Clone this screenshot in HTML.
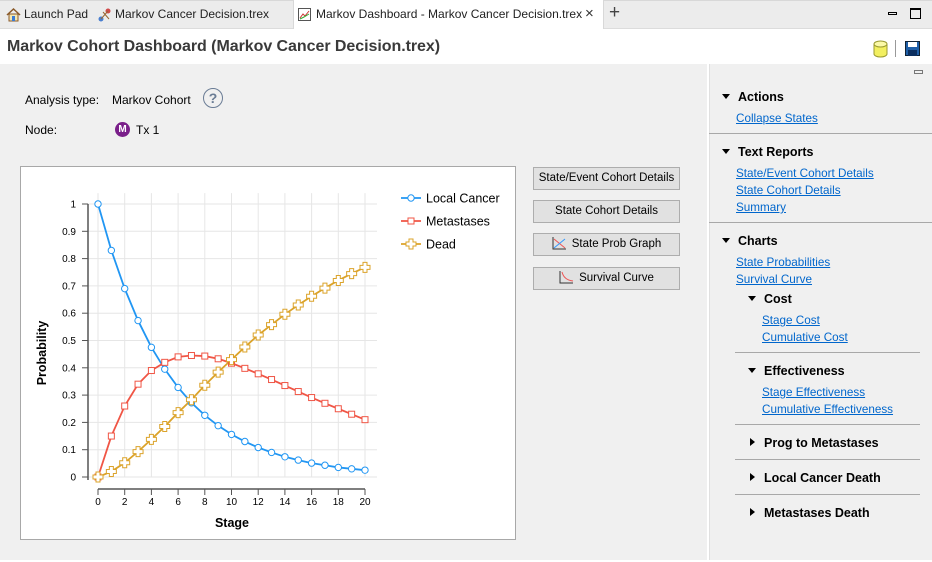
<!DOCTYPE html>
<html><head><meta charset="utf-8"><style>
*{margin:0;padding:0;box-sizing:border-box}
body{width:932px;height:562px;background:#f0f0f0;font-family:"Liberation Sans",sans-serif;font-size:12px;color:#000;position:relative;overflow:hidden}
.abs{position:absolute}
.tabbar{left:0;top:0;width:932px;height:29px;background:#ececec;border-top:1px solid #d8d8d8;border-bottom:1px solid #dcdcdc}
.tab{top:7px;font-size:12px;color:#222;white-space:nowrap}
.hdr{left:0;top:29px;width:932px;height:35px;background:#fff}
.btn{left:533px;width:147px;height:23px;background:#e1e1e1;border:1px solid #adadad;font-size:11.5px;text-align:center;line-height:21px;color:#000}
a{color:#0066cc;text-decoration:underline;font-size:11.7px;position:absolute;white-space:nowrap}
.sh{font-weight:bold;font-size:12.5px;position:absolute;white-space:nowrap}
.tri{display:inline-block;width:0;height:0;border-left:4px solid transparent;border-right:4px solid transparent;border-top:5px solid #000;margin-right:8px;vertical-align:2px}
.trr{display:inline-block;width:0;height:0;border-top:4px solid transparent;border-bottom:4px solid transparent;border-left:5px solid #000;margin-right:9px;margin-left:2px;vertical-align:1px}
.sep{height:1px;background:#a8a8a8;position:absolute}
</style></head><body>
<div class="abs tabbar"></div>
<div class="abs" style="left:293px;top:0;width:311px;height:29px;background:#fff;border-left:1px solid #d8d8d8;border-right:1px solid #d8d8d8"></div>
<svg class="abs" style="left:6px;top:7px" width="15" height="15"><path d="M1 8 L7.5 2 L14 8" fill="none" stroke="#8a5a2a" stroke-width="1.5"/><rect x="3" y="7" width="9" height="7" fill="#f4e6b0" stroke="#8a5a2a"/><rect x="6" y="9" width="3" height="5" fill="#3a7bd5"/></svg>
<div class="abs tab" style="left:24px">Launch Pad</div>
<svg class="abs" style="left:97px;top:7px" width="15" height="15"><circle cx="4" cy="12" r="2.5" fill="#4a7fd0"/><circle cx="11" cy="4" r="2.5" fill="#d04a4a"/><path d="M4 12 L11 4 M6 5 L12 12" stroke="#996633" fill="none"/></svg>
<div class="abs tab" style="left:115px">Markov Cancer Decision.trex</div>
<svg class="abs" style="left:298px;top:8px" width="13" height="13"><rect x=".5" y=".5" width="12" height="12" fill="#fff" stroke="#555"/><path d="M2 10 L5 6 L7 8 L11 3" stroke="#c33" fill="none"/><path d="M2 11 L6 9 L11 6" stroke="#3a3" fill="none"/></svg>
<div class="abs tab" style="left:316px">Markov Dashboard - Markov Cancer Decision.trex</div>
<div class="abs" style="left:585px;top:5px;font-size:15px;color:#333">×</div>
<div class="abs" style="left:609px;top:2px;font-size:19px;color:#444">+</div>
<div class="abs" style="left:888px;top:12px;width:9px;height:3px;border:1px solid #000"></div>
<div class="abs" style="left:910px;top:8px;width:11px;height:11px;border:1px solid #000;border-top-width:2px"></div>
<div class="abs hdr"></div>
<div class="abs" style="left:7px;top:38px;font-size:16px;font-weight:bold;color:#3a3a3a;letter-spacing:-0.05px">Markov Cohort Dashboard (Markov Cancer Decision.trex)</div>
<svg class="abs" style="left:873px;top:40px" width="16" height="18"><path d="M1 4 V14 A6.5 3 0 0 0 14 14 V4" fill="#f2ef60" stroke="#9a9a30"/><ellipse cx="7.5" cy="4" rx="6.5" ry="3" fill="#fbf9a8" stroke="#9a9a30"/></svg>
<div class="abs" style="left:895px;top:40px;width:1px;height:17px;background:#999"></div>
<svg class="abs" style="left:905px;top:41px" width="15" height="15"><rect x=".5" y=".5" width="14" height="14" fill="#1f5fa8" stroke="#123"/><rect x="3" y="1" width="9" height="5" fill="#fff"/><rect x="3" y="9" width="9" height="6" fill="#0b2f60"/></svg>
<div class="abs" style="left:707px;top:64px;width:2px;height:498px;background:#fff"></div>
<div class="abs" style="left:709px;top:64px;width:1px;height:498px;background:#e0e0e0"></div>
<div class="abs" style="left:0;top:560px;width:932px;height:2px;background:#fff"></div>
<div class="abs" style="left:25px;top:93px">Analysis type:</div>
<div class="abs" style="left:112px;top:93px">Markov Cohort</div>
<div class="abs" style="left:203px;top:88px;width:20px;height:20px;border:1.5px solid #6a7c95;border-radius:50%;text-align:center;line-height:18px;font-weight:bold;font-size:14px;color:#6a7c95">?</div>
<div class="abs" style="left:25px;top:123px">Node:</div>
<div class="abs" style="left:115px;top:122px;width:15px;height:15px;border-radius:50%;background:#7a1f8a;color:#fff;font-weight:bold;font-size:10px;text-align:center;line-height:15px">M</div>
<div class="abs" style="left:136px;top:123px">Tx 1</div>
<div class="abs" style="left:20px;top:166px;width:496px;height:374px;background:#fff;border:1px solid #a8a8a8"></div>
<svg id="ch" class="abs" style="left:20px;top:166px" width="496" height="374" font-family="Liberation Sans, sans-serif"></svg>
<div class="abs btn" style="top:167px">State/Event Cohort Details</div>
<div class="abs btn" style="top:200px">State Cohort Details</div>
<div class="abs btn" style="top:233px"><svg width="15" height="14" style="vertical-align:-3px;margin-right:5px"><path d="M1 1 V13 H14" stroke="#333" fill="none"/><path d="M2 3 L13 12" stroke="#e55" fill="none"/><path d="M2 12 L13 3" stroke="#39f" fill="none"/></svg>State Prob Graph</div>
<div class="abs btn" style="top:267px"><svg width="15" height="14" style="vertical-align:-3px;margin-right:5px"><path d="M1 1 V13 H14" stroke="#333" fill="none"/><path d="M3 2 Q5 10 14 11" stroke="#e55" fill="none"/></svg>Survival Curve</div>
<div class="abs" style="left:914px;top:70px;width:9px;height:4px;border:1px solid #777"></div>
<div class="sh" style="left:722px;top:90px"><span class="tri"></span>Actions</div>
<a style="left:736px;top:112px">Collapse States</a>
<div class="sep" style="left:709px;top:133px;width:223px"></div>
<div class="sh" style="left:722px;top:145px"><span class="tri"></span>Text Reports</div>
<a style="left:736px;top:167px">State/Event Cohort Details</a>
<a style="left:736px;top:184px">State Cohort Details</a>
<a style="left:736px;top:201px">Summary</a>
<div class="sep" style="left:709px;top:222px;width:223px"></div>
<div class="sh" style="left:722px;top:234px"><span class="tri"></span>Charts</div>
<a style="left:736px;top:256px">State Probabilities</a>
<a style="left:736px;top:273px">Survival Curve</a>
<div class="sh" style="left:748px;top:292px"><span class="tri"></span>Cost</div>
<a style="left:762px;top:314px">Stage Cost</a>
<a style="left:762px;top:331px">Cumulative Cost</a>
<div class="sep" style="left:735px;top:352px;width:185px"></div>
<div class="sh" style="left:748px;top:364px"><span class="tri"></span>Effectiveness</div>
<a style="left:762px;top:386px">Stage Effectiveness</a>
<a style="left:762px;top:403px">Cumulative Effectiveness</a>
<div class="sep" style="left:735px;top:424px;width:185px"></div>
<div class="sh" style="left:748px;top:436px"><span class="trr"></span>Prog to Metastases</div>
<div class="sep" style="left:735px;top:459px;width:185px"></div>
<div class="sh" style="left:748px;top:471px"><span class="trr"></span>Local Cancer Death</div>
<div class="sep" style="left:735px;top:494px;width:185px"></div>
<div class="sh" style="left:748px;top:506px"><span class="trr"></span>Metastases Death</div>
<script>
var s='',ox=-20,oy=-166;
function X(i){return 98+i*13.35+ox}
function Y(v){return 477-v*273+oy}
for(var i=0;i<=20;i+=2){s+='<line x1="'+X(i)+'" y1="'+Y(1.04)+'" x2="'+X(i)+'" y2="'+Y(0)+'" stroke="#e6e6e6"/>';}
for(var k=0;k<=10;k++){var y=Y(k/10);s+='<line x1="'+(88+ox)+'" y1="'+y+'" x2="'+(377+ox)+'" y2="'+y+'" stroke="#e6e6e6"/><line x1="'+(82+ox)+'" y1="'+y+'" x2="'+(88+ox)+'" y2="'+y+'" stroke="#555"/><text x="'+(76+ox)+'" y="'+(y+3.5)+'" font-size="10" text-anchor="end">'+(k==0?'0':k==10?'1':'0.'+k)+'</text>';}
s+='<line x1="'+(88+ox)+'" y1="'+Y(1)+'" x2="'+(88+ox)+'" y2="'+(480+oy)+'" stroke="#555" stroke-width="1.5"/>';
s+='<line x1="'+X(0)+'" y1="'+(489+oy)+'" x2="'+X(20)+'" y2="'+(489+oy)+'" stroke="#555" stroke-width="1.5"/>';
for(var i=0;i<=20;i+=2){s+='<line x1="'+X(i)+'" y1="'+(489+oy)+'" x2="'+X(i)+'" y2="'+(495+oy)+'" stroke="#555"/><text x="'+X(i)+'" y="'+(505+oy)+'" font-size="10" text-anchor="middle">'+i+'</text>';}
s+='<text x="'+(232+ox)+'" y="'+(527+oy)+'" font-size="12.5" font-weight="bold" text-anchor="middle">Stage</text>';
s+='<text transform="translate('+(46+ox)+','+(353+oy)+') rotate(-90)" font-size="12.5" font-weight="bold" text-anchor="middle">Probability</text>';
var L=[1,.83,.69,.573,.475,.395,.328,.272,.226,.188,.156,.13,.108,.09,.074,.062,.051,.043,.035,.03,.025];
var M=[0,.15,.26,.34,.39,.42,.44,.445,.443,.433,.417,.398,.378,.357,.335,.313,.291,.27,.25,.23,.21];
var D=[0,.02,.052,.093,.138,.185,.236,.283,.336,.384,.43,.476,.52,.558,.596,.63,.662,.692,.72,.745,.768];
function line(a,c){var p=a.map(function(v,i){return X(i)+','+Y(v)}).join(' ');return '<polyline points="'+p+'" fill="none" stroke="'+c+'" stroke-width="1.8"/>'}
function mk(t,x,y,c){if(t==0)return '<circle cx="'+x+'" cy="'+y+'" r="3.2" fill="#fff" stroke="'+c+'"/>';if(t==1)return '<rect x="'+(x-3)+'" y="'+(y-3)+'" width="6" height="6" fill="#fff" stroke="'+c+'"/>';return '<path d="M'+(x-2)+' '+(y-5)+'h4v3h3v4h-3v3h-4v-3h-3v-4h3z" fill="#fff" stroke="'+c+'"/>'}
var S=[[L,'#2196f3'],[M,'#f05545'],[D,'#dba32a']];
S.forEach(function(q,t){s+=line(q[0],q[1]);});
S.forEach(function(q,t){q[0].forEach(function(v,i){s+=mk(t,X(i),Y(v),q[1])})});
var names=['Local Cancer','Metastases','Dead'];
S.forEach(function(q,t){var y=198+t*23+oy;s+='<line x1="'+(401+ox)+'" y1="'+y+'" x2="'+(421+ox)+'" y2="'+y+'" stroke="'+q[1]+'" stroke-width="1.8"/>'+mk(t,411+ox,y,q[1])+'<text x="'+(426+ox)+'" y="'+(y+4.5)+'" font-size="12.5">'+names[t]+'</text>'});
document.getElementById('ch').innerHTML=s;
</script>
</body></html>
